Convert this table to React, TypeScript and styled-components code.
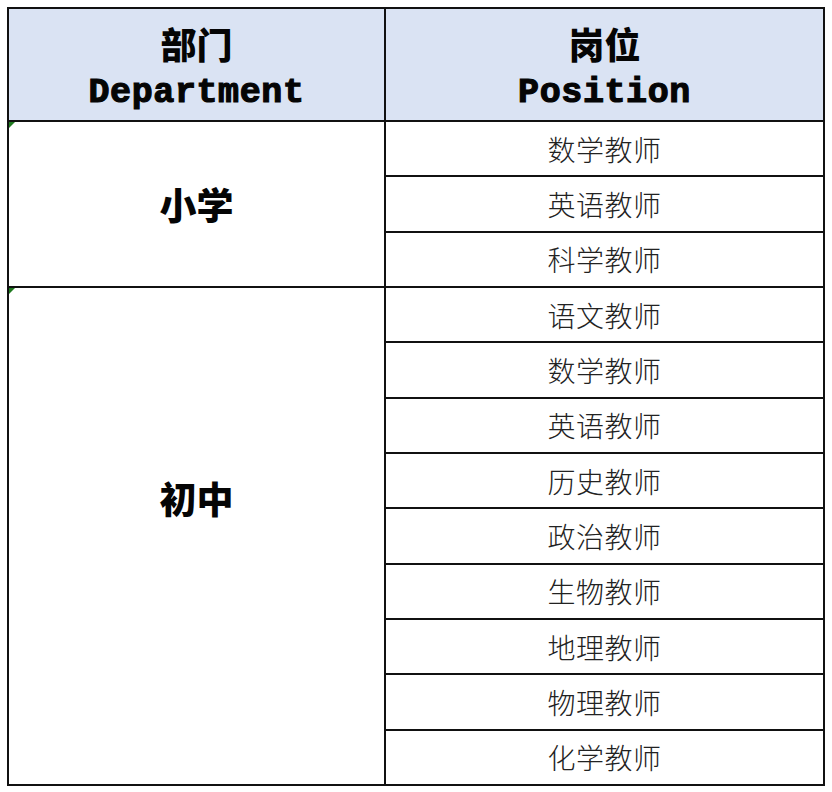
import React from 'react';
import styled, { createGlobalStyle } from 'styled-components';

const GlobalStyle = createGlobalStyle`
  html, body {
    margin: 0;
    padding: 0;
    background: #ffffff;
  }
`;

const departments = [
  { name: '小学', positions: ['数学教师', '英语教师', '科学教师'], lift: 0 },
  {
    name: '初中',
    positions: ['语文教师', '数学教师', '英语教师', '历史教师', '政治教师', '生物教师', '地理教师', '物理教师', '化学教师'],
    lift: 76,
  },
];

// 部门 / 岗位 表
export default function App() {
  return (
    <Page>
      <GlobalStyle />
      <Table>
        <colgroup>
          <col style={{ width: 377 }} />
          <col style={{ width: 439 }} />
        </colgroup>
        <thead>
          <tr>
            <HeadCell>
              <HeadCn>部门</HeadCn>
              <HeadEn>Department</HeadEn>
            </HeadCell>
            <HeadCell>
              <HeadCn>岗位</HeadCn>
              <HeadEn>Position</HeadEn>
            </HeadCell>
          </tr>
        </thead>
        <tbody>
          {departments.map((dept) =>
            dept.positions.map((pos, index) => (
              <Row key={dept.name + index}>
                {index === 0 && (
                  <DeptCell rowSpan={dept.positions.length} $lift={dept.lift}>
                    <Marker />
                    {dept.name}
                  </DeptCell>
                )}
                <PosCell>{pos}</PosCell>
              </Row>
            ))
          )}
        </tbody>
      </Table>
    </Page>
  );
}

const Page = styled.div`
  padding: 7px 7px 8px 7px;
  width: 832px;
  box-sizing: border-box;
`;

const Table = styled.table`
  border-collapse: collapse;
  table-layout: fixed;
  width: 818px;
  border: 2px solid #111111;
`;

const HeadCell = styled.th`
  height: 111px;
  padding: 0;
  background-color: #dae3f3;
  border: 2px solid #111111;
  text-align: center;
  vertical-align: middle;
  color: #050505;
`;

const HeadCn = styled.div`
  font-family: 'Noto Sans CJK SC', sans-serif;
  font-weight: 900;
  font-size: 36px;
  line-height: 42px;
  margin-top: 8px;
`;

const HeadEn = styled.div`
  font-family: 'Liberation Mono', monospace;
  font-weight: 700;
  font-size: 35px;
  line-height: 46px;
  margin-top: 6px;
  letter-spacing: 0.6px;
  -webkit-text-stroke: 1.2px #050505;
`;

const Row = styled.tr`
  height: 55.33px;
`;

const DeptCell = styled.td<{ $lift: number }>`
  position: relative;
  padding: 0 0 ${(p) => p.$lift}px 0;
  border: 2px solid #111111;
  text-align: center;
  vertical-align: middle;
  font-family: 'Noto Sans CJK SC', sans-serif;
  font-weight: 900;
  font-size: 37px;
  color: #050505;
`;

const Marker = styled.span`
  position: absolute;
  left: 0;
  top: 0;
  width: 0;
  height: 0;
  border-top: 6px solid #1f7a1f;
  border-right: 6px solid transparent;
`;

const PosCell = styled.td`
  padding: 0;
  border: 2px solid #111111;
  text-align: center;
  vertical-align: middle;
  font-family: 'Noto Sans CJK SC', sans-serif;
  font-weight: 300;
  font-size: 28px;
  letter-spacing: 0.5px;
  color: #222222;
`;
